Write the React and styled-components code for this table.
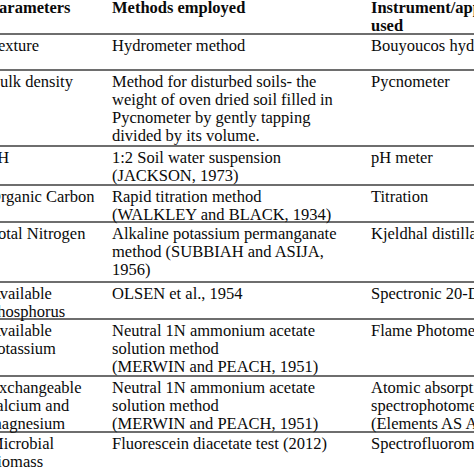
import styled, { createGlobalStyle } from "styled-components";

const GlobalStyle = createGlobalStyle`
  html, body {
    margin: 0;
    padding: 0;
    background: #fff;
  }
`;

const Frame = styled.div`
  width: 474px;
  height: 474px;
  overflow: hidden;
  background: #fff;
`;

const Table = styled.div`
  margin: -1px 0 0 -11px;
  width: 560px;
  font-family: "Liberation Serif", "Times New Roman", serif;
  font-size: 16.5px;
  line-height: 18px;
  color: #0a0a0a;
`;

const Row = styled.div`
  display: grid;
  grid-template-columns: 123px 259px 172px;
  box-sizing: border-box;
  height: ${(p) => p.$h}px;
  padding-top: ${(p) => (p.$head ? 0 : 2)}px;
  border-bottom: 2px solid #6e6e6e;
  font-weight: ${(p) => (p.$head ? 700 : 400)};
  align-items: start;
`;

const Cell = styled.div`
  padding-right: ${(p) => p.$gap || 0}px;
  white-space: pre-line;
`;

const rows = [
  { h: 36, p: "Texture", m: "Hydrometer method", i: "Bouyoucos hydrometer" },
  {
    h: 76,
    p: "Bulk density",
    m: "Method for disturbed soils- the weight of oven dried soil filled in Pycnometer by gently tapping divided by its volume.",
    i: "Pycnometer",
  },
  { h: 39, p: "pH", m: "1:2 Soil water suspension (JACKSON, 1973)", i: "pH meter" },
  {
    h: 37,
    p: "Organic Carbon",
    m: "Rapid titration method (WALKLEY and BLACK, 1934)",
    i: "Titration",
  },
  {
    h: 60,
    p: "Total Nitrogen",
    m: "Alkaline potassium permanganate method (SUBBIAH and ASIJA, 1956)",
    i: "Kjeldhal distillation",
  },
  {
    h: 37,
    p: "Available phosphorus",
    m: "OLSEN et al., 1954",
    i: "Spectronic 20-D",
  },
  {
    h: 57,
    p: "Available potassium",
    m: "Neutral 1N ammonium acetate\nsolution method\n(MERWIN and PEACH, 1951)",
    i: "Flame Photometer",
  },
  {
    h: 56,
    p: "Exchangeable calcium and magnesium",
    m: "Neutral 1N ammonium acetate\nsolution method\n(MERWIN and PEACH, 1951)",
    i: "Atomic absorption spectrophotometer (Elements AS AAS4141)",
  },
  {
    h: 60,
    p: "Microbial biomass",
    m: "Fluorescein diacetate test (2012)",
    i: "Spectrofluorometer",
  },
];

export default function App() {
  return (
    <>
      <GlobalStyle />
      <Frame>
        <Table>
          <Row $h={36} $head>
            <Cell $gap={12}>Parameters</Cell>
            <Cell $gap={21}>Methods employed</Cell>
            <Cell>Instrument/apparatus used</Cell>
          </Row>
          {rows.map((r) => (
            <Row key={r.p} $h={r.h}>
              <Cell $gap={12}>{r.p}</Cell>
              <Cell $gap={21}>{r.m}</Cell>
              <Cell>{r.i}</Cell>
            </Row>
          ))}
        </Table>
      </Frame>
    </>
  );
}
